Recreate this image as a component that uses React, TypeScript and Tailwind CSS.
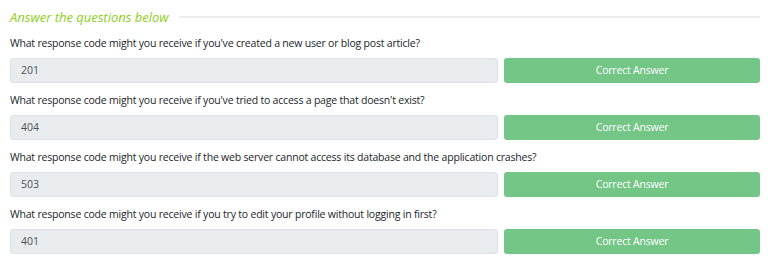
import React from 'react';

const questions = [
  { text: "What response code might you receive if you've created a new user or blog post article?", answer: '201' },
  { text: "What response code might you receive if you've tried to access a page that doesn't exist?", answer: '404' },
  { text: 'What response code might you receive if the web server cannot access its database and the application crashes?', answer: '503' },
  { text: 'What response code might you receive if you try to edit your profile without logging in first?', answer: '401' },
];

export default function App() {
  return (
    <div className="w-[768px] h-[262px] bg-white pl-[10px] pr-[8px] pt-[8px] font-['Open_Sans',sans-serif] overflow-hidden">
      <div className="flex items-center gap-[10px] h-[18px]">
        <span className="text-[13px] italic text-[#8ccf1c] leading-none">Answer the questions below</span>
        <div className="flex-1 h-[2px] bg-[#ededed]" />
      </div>
      <div className="flex flex-col gap-[9px] mt-[9px]">
        {questions.map((q) => (
          <div key={q.answer}>
            <p className="text-[10.5px] tracking-[-0.2px] text-[#212529] leading-[16px] mb-[7px]">{q.text}</p>
            <div className="flex gap-[6px] h-[25px]">
              <div className="w-[488px] rounded-[3px] border border-[#dfe3e7] bg-[#e9ecef] px-[10px] flex items-center text-[10.5px] text-[#495057]">
                {q.answer}
              </div>
              <button className="flex-1 rounded-[3px] bg-[#74c687] text-white text-[10.5px] tracking-[-0.2px] flex items-center justify-center">
                Correct Answer
              </button>
            </div>
          </div>
        ))}
      </div>
    </div>
  );
}
